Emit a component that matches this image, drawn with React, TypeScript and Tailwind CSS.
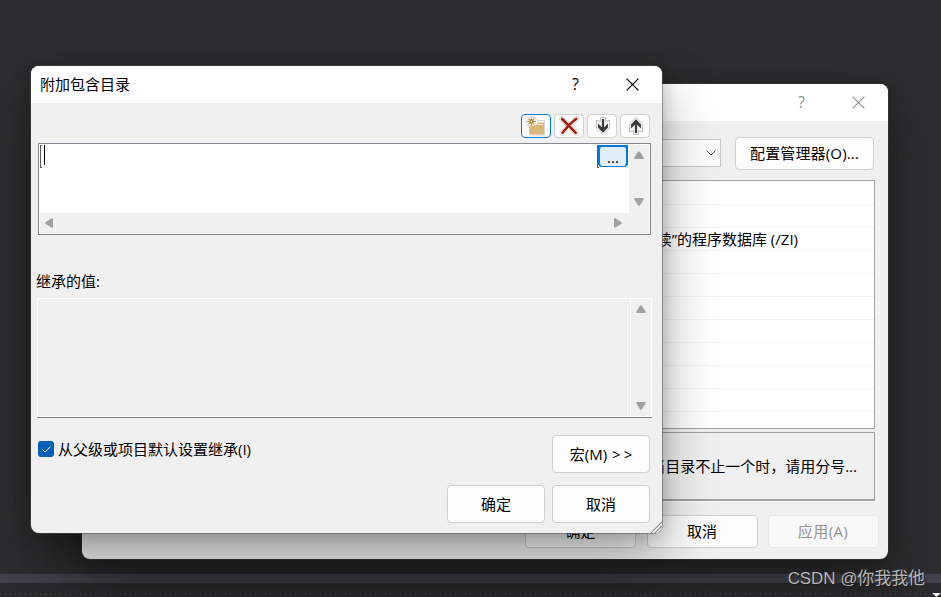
import { useState, type ReactNode } from "react";

const EDGE = "border-[#d0d0d0]";

function PushButton({ children, className = "" }: { children: ReactNode; className?: string }) {
  return (
    <button
      type="button"
      className={`flex shrink-0 items-center justify-center rounded-[4px] border whitespace-pre ${className}`}
    >
      {children}
    </button>
  );
}

function CloseIcon({ className = "" }: { className?: string }) {
  return (
    <svg width="13" height="13" viewBox="0 0 13 13" fill="none" className={className}>
      <path d="M.6.6 12.4 12.4M12.4.6.6 12.4" stroke="currentColor" strokeWidth="1.2" />
    </svg>
  );
}

// points up; rotated for the other three ends
function ScrollArrow({ className = "" }: { className?: string }) {
  return (
    <svg width="10" height="8" viewBox="0 0 10 8" className={className}>
      <path d="M4 .8Q5-.3 6 .8L9.600 6.400Q10 8 9 8H1Q0 8 .4 6.400Z" fill="#a0a0a0" />
    </svg>
  );
}

function NewFolderIcon() {
  return (
    <svg width="22" height="20" viewBox="0 0 22 20">
      <path d="M3.500.8h6L12 4.500h7.500V19H4.500v-8.500L1 8V3.500z" fill="#fafafa" stroke="#d2d2d2" strokeWidth=".9" />
      <path d="M4.500 9.500H11l1.500-3h6.500V18.500H4.500z" fill="#dcb67a" />
      <path d="M12.500 8.500h5.500" stroke="#f8ecd6" strokeWidth="1.200" />
      <path d="M6.500 1.500v8M2 5.500h9M3.500 2.500l6 6M9.500 2.500l-6 6" stroke="#d09a4a" strokeWidth="1.100" />
      <circle cx="6.500" cy="5.500" r="1.600" fill="#fff" stroke="#b9771c" strokeWidth="1.100" />
    </svg>
  );
}

function DeleteIcon() {
  return (
    <svg width="20" height="20" viewBox="0 0 20 20" fill="none" strokeLinecap="round" strokeLinejoin="round">
      <path d="M3 2.800 17 17M17.500 2.800 3.500 17" stroke="#c9c9c9" strokeWidth="5.200" />
      <path d="M3 2.800 17 17M17.500 2.800 3.500 17" stroke="#f8f8f8" strokeWidth="4" />
      <path d="M3.200 3 16.800 16.800" stroke="#a51d07" strokeWidth="2.600" />
      <path d="M17.300 2.800Q9 9 3.500 16.800" stroke="#a51d07" strokeWidth="2.400" />
    </svg>
  );
}

function ArrowIcon({ className = "" }: { className?: string }) {
  return (
    <svg width="18" height="18" viewBox="0 0 18 18" fill="none" className={className}>
      <path d="M6.500.5h5v4l4-1.500v8L9 17.500 2.500 11V3l4 1.500z" fill="#f8f8f8" stroke="#b8b8b8" strokeWidth=".9" />
      <path d="M9 2v12" stroke="#3b3b3b" strokeWidth="2.200" />
      <path d="M4 6.500 9 11.200l5-4.700v4L9 15.800 4 10.500z" fill="#3b3b3b" />
    </svg>
  );
}

function PropertyPages() {
  return (
    <section className="absolute top-[84px] left-[82px] h-[475px] w-[806px] rounded-lg shadow-[0_0_0_1px_rgba(70,70,70,0.4),0_28px_56px_rgba(0,0,0,0.35),0_2px_18px_rgba(0,0,0,0.2)]">
      <div className="flex h-full flex-col overflow-hidden rounded-lg bg-[#f0f0f0]">
        <header className="flex h-[37px] shrink-0 items-center justify-end bg-white pr-[23px] text-[#929292]">
          <span className="mr-[47px] -mt-0.5 font-['Open_Sans'] text-base">?</span>
          <CloseIcon className="-mt-px" />
        </header>

        <div className="flex h-[59px] shrink-0 items-start justify-end gap-[14px] pt-4 pr-[14px]">
          <div className="mt-0.5 flex h-7 w-[170px] items-center justify-end border border-[#c8c8c8] bg-[#fdfdfd] pr-1">
            <svg width="10" height="6" viewBox="0 0 10 6" fill="none">
              <path d="m.5.5 4.500 4.500L9.500.5" stroke="#5c5c5c" />
            </svg>
          </div>
          <PushButton className={`h-[33px] w-[139px] bg-[#fdfdfd] tracking-[0.15px] ${EDGE}`}>配置管理器(O)...</PushButton>
        </div>

        <div className="mr-[13px] ml-3 h-[249px] shrink-0 border border-[#a0a0a0] bg-white">
          {Array.from({ length: 10 }, (_, row) => (
            <div
              key={row}
              className={`flex items-center justify-end border-b border-[#f2f3f5] pr-[76px] ${row === 0 ? "h-6" : "h-[23px]"}`}
            >
              {row === 2 && "用于“编辑并继续”的程序数据库 (/ZI)"}
            </div>
          ))}
        </div>

        <div className="mt-[3px] mr-[13px] ml-3 flex h-[69px] shrink-0 items-center justify-end border border-b-2 border-[#a0a0a0] pt-px pr-[17px] shadow-[0_1px_0_#fff]">
          当目录不止一个时，请用分号...
        </div>

        <footer className="mt-[14px] flex justify-end gap-[11px] pr-[9px]">
          <PushButton className={`h-[33px] w-[111px] bg-[#fdfdfd] ${EDGE}`}>确定</PushButton>
          <PushButton className={`h-[33px] w-[111px] bg-[#fdfdfd] pr-px ${EDGE}`}>取消</PushButton>
          <PushButton className="-ml-px h-[33px] w-[111px] border-[#e8e8e8] bg-[#f8f8f8] pr-px tracking-[0.4px] text-[#929292]">
            应用(A)
          </PushButton>
        </footer>
      </div>
    </section>
  );
}

function IncludeDirectories() {
  const [inherit, setInherit] = useState(true);

  return (
    <section className="absolute top-[66px] left-[31px] h-[467px] w-[631px] rounded-lg bg-[#f0f0f0] shadow-[0_0_0_1px_rgba(80,80,80,0.5),0_28px_56px_rgba(0,0,0,0.34),0_2px_18px_rgba(0,0,0,0.2)]">
      <div className="flex h-full flex-col overflow-hidden rounded-lg">
        <header className="flex h-[37px] shrink-0 items-center bg-white pr-[23px] pl-[9px]">
          <span className="flex-1">附加包含目录</span>
          <span className="mr-[47px] -mt-0.5 font-['Open_Sans'] text-base">?</span>
          <CloseIcon className="-mt-px" />
        </header>

        <div className="flex h-10 shrink-0 justify-end gap-[3px] pt-[11px] pr-3">
          <PushButton className="h-6 w-[30px] border-[#0078d4] bg-[#fdfdfd]"><NewFolderIcon /></PushButton>
          <PushButton className={`h-6 w-[30px] bg-[#fdfdfd] ${EDGE}`}><DeleteIcon /></PushButton>
          <PushButton className={`h-6 w-[30px] bg-[#fdfdfd] pl-px ${EDGE}`}><ArrowIcon /></PushButton>
          <PushButton className={`h-6 w-[30px] bg-[#fdfdfd] pl-px ${EDGE}`}><ArrowIcon className="rotate-180" /></PushButton>
        </div>

        {/* editable directory list */}
        <div className="ml-[7px] h-[92px] w-[613px] shrink-0 border border-[#828790] bg-white p-px">
          <div className="flex h-[68px]">
            <div className="flex flex-1 items-start">
              <span className="h-[23px] w-[2px] border-y border-l border-[#5a5a5a]" />
              <span className="ml-[2px] h-5 w-px bg-black" />
              <span className="ml-auto h-[23px] w-[2px] border-y border-l border-[#5a5a5a]" />
              <div className="mr-px -ml-px h-5 w-[30px] bg-[#0078d4]">
                <button
                  type="button"
                  className="flex h-[22px] w-[30px] items-end justify-center rounded-[4px] border-2 border-b border-[#0078d4] bg-[#e0eef9] leading-[18px]"
                >
                  ...
                </button>
              </div>
            </div>
            <div className="flex w-5 flex-col items-center justify-between bg-[#f0f0f0] pt-1.5 pr-px pb-[7px]">
              <ScrollArrow />
              <ScrollArrow className="rotate-180" />
            </div>
          </div>
          <div className="flex h-5 items-center justify-between bg-[#f0f0f0] pr-[26px] pb-px pl-1">
            <ScrollArrow className="-rotate-90" />
            <ScrollArrow className="rotate-90" />
          </div>
        </div>

        <div className="mt-[35px] ml-[5px] h-[22px] shrink-0 leading-[22px]">继承的值:</div>

        <div className="mt-1.5 ml-[6px] flex h-[120px] w-[615px] shrink-0 border-b border-[#808080]">
          <div className="flex flex-1 border border-white">
            <div className="flex-1" />
            <div className="flex w-[21px] flex-col items-center justify-between border-l border-white pt-1.5 pr-px pb-1.5">
              <ScrollArrow />
              <ScrollArrow className="rotate-180" />
            </div>
          </div>
        </div>

        <div className="mt-[17px] flex h-[38px] shrink-0 items-start justify-between pr-3 pl-[7px]">
          <label className="flex items-center gap-1 pt-[3px]">
            <input type="checkbox" className="sr-only" checked={inherit} onChange={() => setInherit(!inherit)} />
            <span className="flex size-4 items-center justify-center rounded-[3px] bg-[#005fb8]">
              {inherit && (
                <svg width="9" height="7" viewBox="0 0 9 7" fill="none">
                  <path d="m.5 3.500 2.600 2.600L8.500.6" stroke="#fff" />
                </svg>
              )}
            </span>
            从父级或项目默认设置继承(I)
          </label>
          <PushButton className={`h-[38px] w-[98px] bg-[#fdfdfd] ${EDGE}`}>
            宏(M)<span className="ml-[5px] -mr-[3px] tracking-[3px]">&gt;&gt;</span>
          </PushButton>
        </div>

        <footer className="mt-3 flex justify-end gap-[7px] pr-3">
          <PushButton className={`h-[38px] w-[98px] bg-[#fdfdfd] ${EDGE}`}>确定</PushButton>
          <PushButton className={`h-[38px] w-[98px] bg-[#fdfdfd] ${EDGE}`}>取消</PushButton>
        </footer>
      </div>

      {/* resize grip */}
      <svg width="12" height="12" viewBox="0 0 12 12" className="absolute right-0 bottom-0" fill="none">
        <path d="M1 12 12 1M5 12l7-7" stroke="#8c8c8c" strokeWidth="1.200" />
        <path d="M2.500 12 12 2.500M6.500 12 12 6.500" stroke="#fff" />
      </svg>
    </section>
  );
}

export default function App() {
  return (
    <main className="relative h-[597px] w-[941px] overflow-hidden bg-[#2d2d2f] font-['Open_Sans','Noto_Sans_CJK_SC',sans-serif] text-[15px] text-black">
      <div className="flex h-full flex-col justify-end">
        <div className="h-[9px] bg-[#42424c]" />
        <div className="flex h-[14px] items-end bg-[#2b2b2d] pb-[2px]">
          <div className="h-px flex-1 bg-[repeating-linear-gradient(90deg,#5a5458_0_1px,transparent_1px_5px)]" />
        </div>
      </div>
      <PropertyPages />
      <IncludeDirectories />
      <span className="absolute right-4 bottom-1.5 font-['Liberation_Sans','Noto_Sans_CJK_SC',sans-serif] text-[17px] leading-6 tracking-[-0.08px] text-[#b4b4b5] [text-shadow:1px_1px_1px_#1a1a1a]">
        CSDN @你我我他
      </span>
      <svg width="9" height="4" viewBox="0 0 9 4" className="absolute right-0 bottom-0">
        <path d="M0 0h9L4.500 4z" fill="#f1f1f1" />
      </svg>
    </main>
  );
}
